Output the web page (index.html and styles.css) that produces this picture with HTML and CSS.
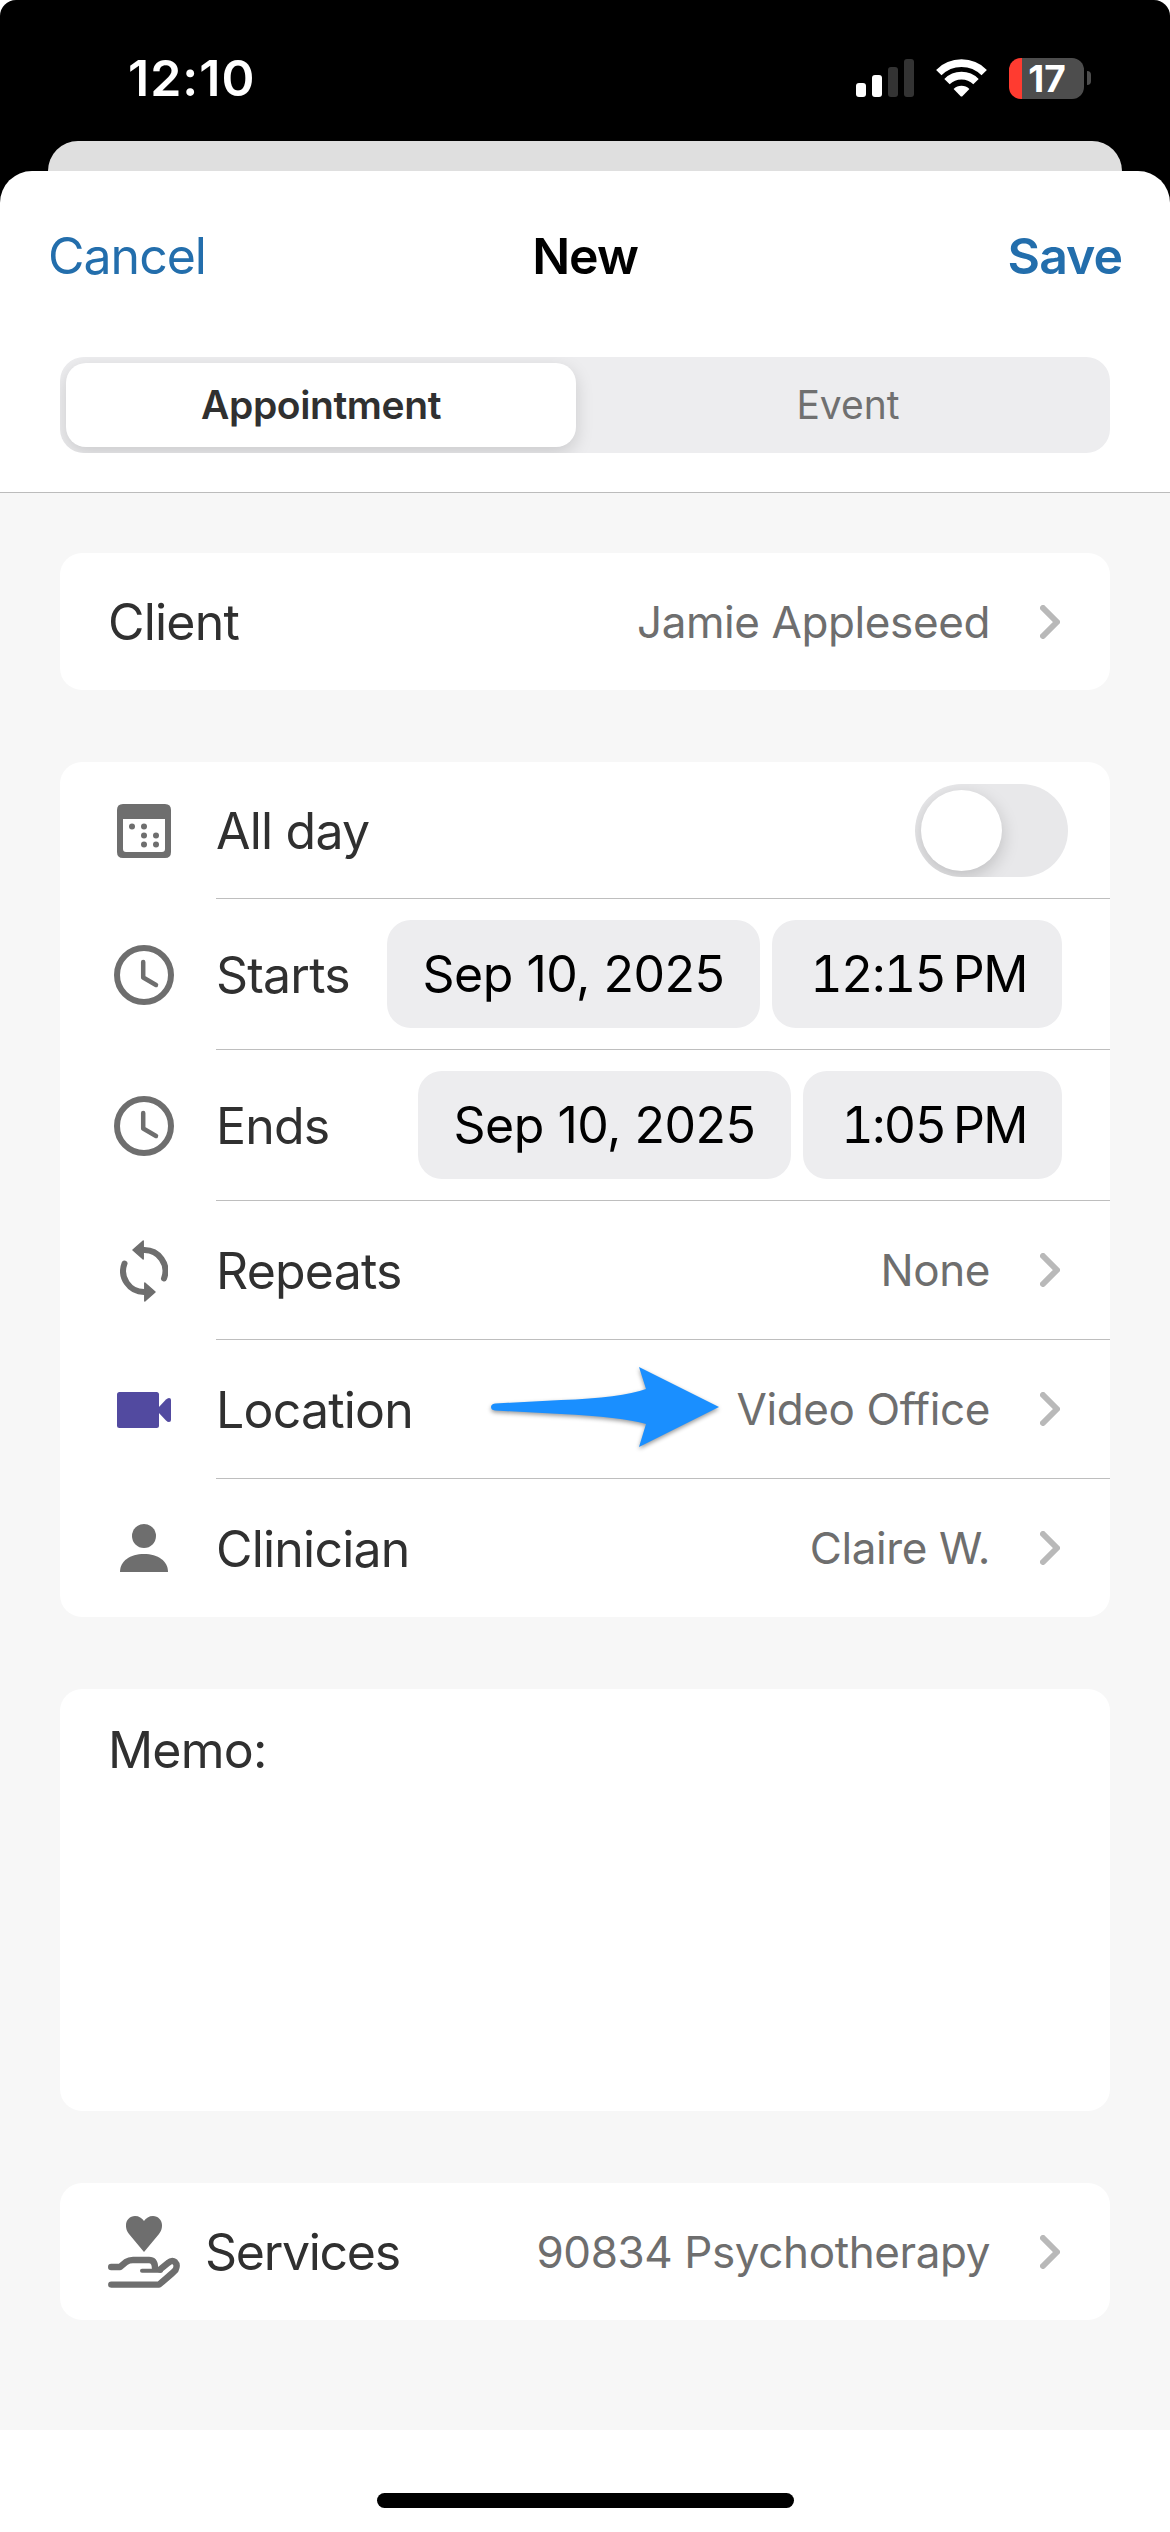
FILE: index.html
```html
<!DOCTYPE html>
<html lang="en">
<head>
    <meta charset="UTF-8">
    <meta name="viewport" content="width=device-width, initial-scale=1.0">
    <title>New Appointment</title>
    <link rel="stylesheet" href="styles.css">
</head>
<body>

<div class="screen">
    <div class="status-bar">
        <span class="status-time">12:10</span>
        <div class="status-icons">
            <svg class="signal" viewBox="0 0 58 38">
                <rect x="0" y="24" width="10" height="14" rx="3" fill="#fff"/>
                <rect x="16" y="16" width="10" height="22" rx="3" fill="#fff"/>
                <rect x="32" y="8" width="10" height="30" rx="3" fill="#333"/>
                <rect x="48" y="0" width="10" height="38" rx="3" fill="#333"/>
            </svg>
            <svg class="wifi" viewBox="0 0 51 38">
                <g fill="none" stroke="#fff" stroke-width="7.6">
                    <path d="M2.8 13.6 A32 32 0 0 1 48.2 13.6"/>
                    <path d="M11 22.6 A20.5 20.5 0 0 1 40 22.6"/>
                </g>
                <path d="M17.6 30 A11.5 11.5 0 0 1 33.4 30 L26.6 37 Q25.5 38 24.4 37 Z" fill="#fff"/>
            </svg>
            <div class="battery">
                <span class="battery-level">17</span>
                <span class="battery-nub"></span>
            </div>
        </div>
    </div>

    <div class="back-sheet"></div>

    <div class="sheet">
        <div class="nav">
            <a class="nav-cancel">Cancel</a>
            <span class="nav-title">New</span>
            <a class="nav-save">Save</a>
        </div>

        <div class="tabs">
            <div class="tab active">Appointment</div>
            <div class="tab">Event</div>
        </div>

        <div class="content">
            <div class="card">
                <div class="row row-plain">
                    <span class="label">Client</span>
                    <span class="value">Jamie Appleseed</span>
                    <svg class="chevron" viewBox="0 0 20 34"><path d="M3 3 L17 17 L3 31"/></svg>
                </div>
            </div>

            <div class="card">
                <div class="row">
                    <div class="icon">
                        <svg width="54" height="54" viewBox="0 0 54 54" fill="#6e6e6e">
                            <path fill-rule="evenodd" d="M6 0 H48 Q54 0 54 6 V48 Q54 54 48 54 H6 Q0 54 0 48 V6 Q0 0 6 0 Z M6 15 V45 Q6 48 9 48 H45 Q48 48 48 45 V15 Z"/>
                            <circle cx="15" cy="22.5" r="3"/>
                            <circle cx="27" cy="22.5" r="3"/>
                            <circle cx="27" cy="31.5" r="3"/>
                            <circle cx="39" cy="31.5" r="3"/>
                            <circle cx="27" cy="40.5" r="3"/>
                            <circle cx="39" cy="40.5" r="3"/>
                        </svg>
                    </div>
                    <div class="row-body row-switch">
                        <span class="label">All day</span>
                        <div class="switch"><div class="knob"></div></div>
                    </div>
                </div>

                <div class="row row-date">
                    <div class="icon">
                        <svg class="clock" viewBox="0 0 60 60"><circle cx="30" cy="30" r="27"/><path d="M29.2 17 V32.5 L42 40"/></svg>
                    </div>
                    <div class="row-body">
                        <span class="label">Starts</span>
                        <div class="chips">
                            <span class="chip chip-date">Sep 10, 2025</span>
                            <span class="chip chip-time">12:15&#8239;PM</span>
                        </div>
                    </div>
                </div>

                <div class="row row-date">
                    <div class="icon">
                        <svg class="clock" viewBox="0 0 60 60"><circle cx="30" cy="30" r="27"/><path d="M29.2 17 V32.5 L42 40"/></svg>
                    </div>
                    <div class="row-body">
                        <span class="label">Ends</span>
                        <div class="chips">
                            <span class="chip chip-date">Sep 10, 2025</span>
                            <span class="chip chip-time short">1:05&#8239;PM</span>
                        </div>
                    </div>
                </div>

                <div class="row row-link">
                    <div class="icon">
                        <svg width="48" height="62" viewBox="0 0 48 62">
                            <g fill="none" stroke="#6e6e6e" stroke-width="6" stroke-linecap="round">
                                <path d="M24 10 A21 21 0 0 1 44 38.5"/>
                                <path d="M24 52 A21 21 0 0 1 4.5 23.5"/>
                            </g>
                            <g fill="#6e6e6e" stroke="#6e6e6e" stroke-width="1.5" stroke-linejoin="round">
                                <path d="M23.2 1 V19 L13 10 Z"/>
                                <path d="M24.8 43 V61 L35 52 Z"/>
                            </g>
                        </svg>
                    </div>
                    <div class="row-body">
                        <span class="label">Repeats</span>
                        <span class="value">None</span>
                        <svg class="chevron" viewBox="0 0 20 34"><path d="M3 3 L17 17 L3 31"/></svg>
                    </div>
                </div>

                <div class="row row-link">
                    <div class="icon">
                        <svg width="54" height="36" viewBox="0 0 54 36" fill="#524aa0">
                            <rect width="42" height="36" rx="2.5"/>
                            <path d="M41 16 L49 7.5 Q50.5 6 52 6 Q54 6 54 8 V28 Q54 30 52 30 Q50.5 30 49 28.5 L41 20 Z"/>
                        </svg>
                    </div>
                    <div class="row-body">
                        <span class="label">Location</span>
                        <span class="value">Video Office</span>
                        <svg class="chevron" viewBox="0 0 20 34"><path d="M3 3 L17 17 L3 31"/></svg>
                    </div>
                    <svg class="arrow" viewBox="0 0 228 82">
                        <path d="M4 37.5 L70 34 Q130 32 155 23 L148 1 L228 41 L148 81 L155 58 Q130 51 70 48 L4 44.5 Q0 44 0 41 Q0 38 4 37.5 Z"/>
                    </svg>
                </div>

                <div class="row row-link last">
                    <div class="icon">
                        <svg width="48" height="48" viewBox="0 0 48 48" fill="#6e6e6e">
                            <circle cx="24" cy="12" r="12"/>
                            <path d="M0 48 C0 37 10 30 24 30 C38 30 48 37 48 48 Z"/>
                        </svg>
                    </div>
                    <div class="row-body">
                        <span class="label">Clinician</span>
                        <span class="value">Claire W.</span>
                        <svg class="chevron" viewBox="0 0 20 34"><path d="M3 3 L17 17 L3 31"/></svg>
                    </div>
                </div>
            </div>

            <div class="card memo">
                <span class="label">Memo:</span>
            </div>

            <div class="card">
                <div class="row row-plain">
                    <svg class="service-icon" viewBox="0 0 72 72">
                        <path fill="#6e6e6e" d="M36 36 L21 18 C18 14 18 11 18 9 C18 4 22 0 27 0 C31 0 34 2 36 5 C38 2 41 0 45 0 C50 0 54 4 54 9 C54 11 54 14 51 18 Z"/>
                        <g fill="none" stroke="#6e6e6e" stroke-linecap="round" stroke-linejoin="round">
                            <path stroke-width="6.4" d="M3.2 51 H12 L18 46 Q21 44 25 44 H41 Q47 44 47 52"/>
                            <path stroke-width="4" d="M34 54.8 H53"/>
                            <path stroke-width="6.4" d="M52 53.4 L60 47 Q64 43.5 67 46 Q70 49 67.5 54 Q66 56 51 68.6 H3.3"/>
                        </g>
                    </svg>
                    <span class="label label-services">Services</span>
                    <span class="value">90834 Psychotherapy</span>
                    <svg class="chevron" viewBox="0 0 20 34"><path d="M3 3 L17 17 L3 31"/></svg>
                </div>
            </div>
        </div>

        <div class="home-area">
            <div class="home-bar"></div>
        </div>
    </div>
</div>

</body>
</html>
```

FILE: styles.css
```css
* {
    box-sizing: border-box;
}

body {
    margin: 0;
    background-color: #fff;
    font-family: Inter, "Liberation Sans", sans-serif;
    color: #303030;
}

.screen {
    display: flex;
    flex-direction: column;
    width: 1170px;
    height: 2532px;
    background: linear-gradient(#000 300px, #fff 300px);
    border-radius: 16px 16px 0 0;
    overflow: hidden;
}

svg {
    display: block;
    flex-shrink: 0;
}

/* status bar */
.status-bar {
    display: flex;
    justify-content: space-between;
    align-items: center;
    height: 141px;
    padding: 15px 79px 0 128px;
    color: #fff;
}

.status-time {
    font-size: 50px;
    font-weight: 600;
    letter-spacing: 1px;
}

.status-icons {
    display: flex;
    align-items: center;
    gap: 22px;
}

.signal {
    width: 58px;
    height: 38px;
}

.wifi {
    width: 51px;
    height: 38px;
}

.battery {
    display: flex;
    align-items: center;
    gap: 3px;
}

.battery-level {
    width: 75px;
    height: 41px;
    border-radius: 12px;
    background: linear-gradient(to right, #ff3b30 13px, #4d4d4d 13px);
    font-size: 37px;
    font-weight: 700;
    line-height: 41px;
    text-align: center;
    padding-left: 1px;
}

.battery-nub {
    width: 4px;
    height: 14px;
    border-radius: 0 4px 4px 0;
    background-color: #4d4d4d;
}

/* sheets */
.back-sheet {
    height: 30px;
    margin: 0 48px;
    border-radius: 30px 30px 0 0;
    background-color: #dfdfdf;
}

.sheet {
    display: flex;
    flex-direction: column;
    flex: 1;
    background-color: #fff;
    border-radius: 32px 32px 0 0;
}

.nav {
    display: grid;
    grid-template-columns: 1fr auto 1fr;
    align-items: center;
    height: 170px;
    padding: 0 48px;
    font-size: 50px;
}

.nav-cancel {
    color: #236eac;
    letter-spacing: -1px;
}

.nav-title {
    color: #000;
    font-weight: 600;
    letter-spacing: -1px;
}

.nav-save {
    color: #236eac;
    font-weight: 600;
    letter-spacing: -1px;
    text-align: right;
}

.tabs {
    display: flex;
    height: 96px;
    margin: 16px 60px 39px;
    padding: 6px;
    border-radius: 24px;
    background-color: #ededef;
    overflow: hidden;
}

.tab {
    flex: 1;
    padding-left: 16px;
    border-radius: 20px;
    font-size: 39px;
    line-height: 84px;
    text-align: center;
    color: #707070;
}

.tab.active {
    flex: 0 0 510px;
    padding-left: 0;
    background-color: #fff;
    color: #303030;
    font-weight: 600;
    letter-spacing: -0.4px;
    box-shadow: 0 6px 18px rgba(0, 0, 0, 0.15);
}

.content {
    display: flex;
    flex-direction: column;
    gap: 72px;
    height: 1938px;
    padding: 60px 60px 0;
    border-top: 1px solid #bcbcbc;
    background-color: #f7f7f7;
}

.card {
    border-radius: 22px;
    background-color: #fff;
}

/* rows */
.row {
    position: relative;
    display: flex;
    height: 137px;
}

.row-plain {
    align-items: center;
    padding: 0 50px 0 48px;
}

.row-date {
    height: 151px;
}

.row-link {
    height: 139px;
}

.row-link.last {
    height: 138px;
}

.icon {
    display: flex;
    justify-content: center;
    align-items: center;
    width: 156px;
    padding-left: 12px;
}

.clock {
    width: 60px;
    height: 60px;
    fill: none;
    stroke: #6e6e6e;
    stroke-width: 6;
    stroke-linecap: round;
    stroke-linejoin: round;
}

.clock path {
    stroke-width: 4.5;
}

.row-body {
    display: flex;
    flex: 1;
    align-items: center;
    padding-right: 50px;
    border-bottom: 1px solid #bebebe;
}

.row-date .row-body {
    padding-right: 48px;
}

.row-switch {
    padding-right: 42px;
}

.last .row-body {
    border-bottom: none;
}

.label {
    flex: 1;
    padding-top: 1px;
    font-size: 50px;
    letter-spacing: -0.8px;
    white-space: nowrap;
}

.label-services {
    letter-spacing: -1.3px;
}

.value {
    margin-right: 50px;
    font-size: 44px;
    letter-spacing: -0.4px;
    color: #6e6e6e;
    white-space: nowrap;
}

.chevron {
    width: 20px;
    height: 34px;
    fill: none;
    stroke: #b9b9b9;
    stroke-width: 6;
    stroke-linecap: round;
    stroke-linejoin: round;
}

.switch {
    width: 153px;
    height: 93px;
    padding: 6px;
    border-radius: 47px;
    background-color: #e8e8ea;
    overflow: hidden;
}

.knob {
    width: 81px;
    height: 81px;
    border-radius: 50%;
    background-color: #fff;
    box-shadow: 0 6px 18px rgba(0, 0, 0, 0.18);
}

.chips {
    display: flex;
    gap: 12px;
}

.chip {
    height: 108px;
    border-radius: 24px;
    background-color: #ededef;
    color: #000;
    font-size: 50px;
    line-height: 109px;
    text-align: center;
    white-space: nowrap;
}

.chip-date {
    width: 373px;
    letter-spacing: -0.5px;
}

.chip-time {
    width: 290px;
    padding-left: 3px;
    font-variant-numeric: tabular-nums;
    letter-spacing: -1.6px;
}

.chip-time.short {
    width: 259px;
}

/* pointer over the location row */
.arrow {
    position: absolute;
    left: 431px;
    top: 26px;
    width: 228px;
    height: 82px;
    overflow: visible;
    fill: #1a8fff;
    filter: drop-shadow(0 2px 2px rgba(0, 0, 0, 0.4));
}

.memo {
    display: flex;
    height: 422px;
    padding: 30px 48px;
}

.service-icon {
    width: 72px;
    height: 72px;
    margin-right: 25px;
}

/* home indicator */
.home-area {
    display: flex;
    justify-content: center;
    padding-top: 63px;
}

.home-bar {
    width: 417px;
    height: 15px;
    border-radius: 8px;
    background-color: #000;
}
```
